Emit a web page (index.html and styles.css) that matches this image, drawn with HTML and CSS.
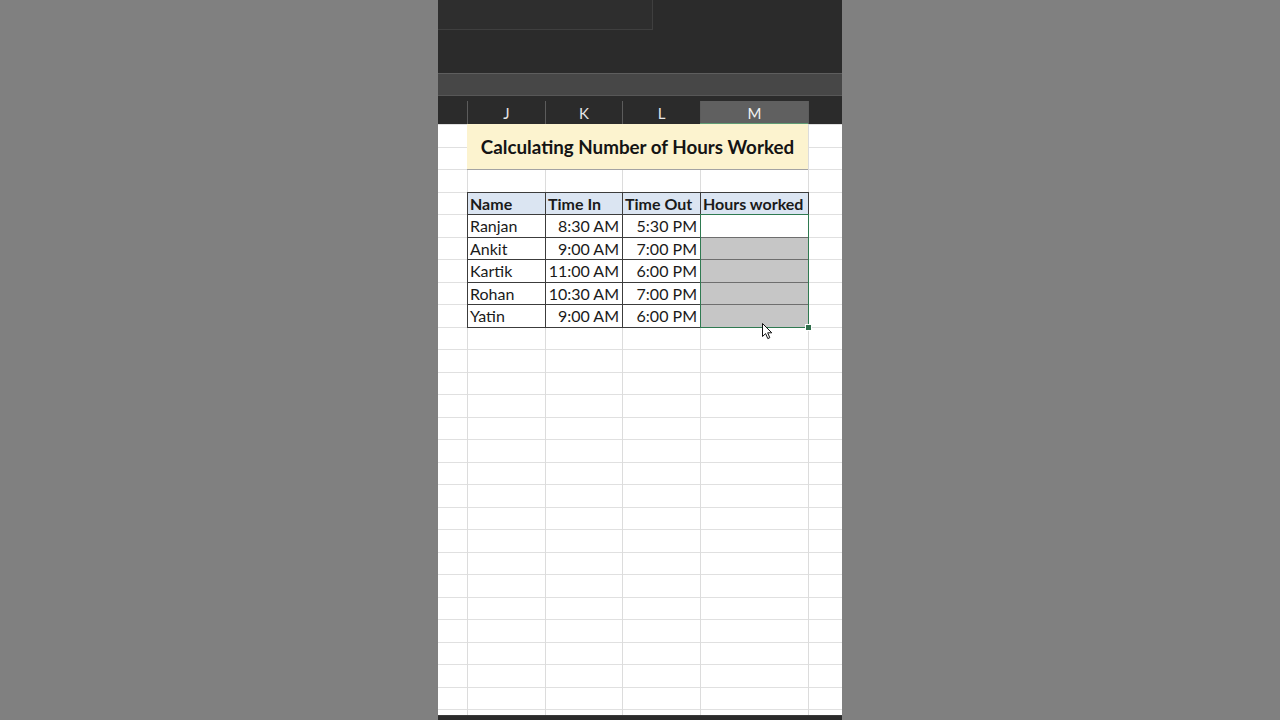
FILE: index.html
```html
<!DOCTYPE html>
<html lang="en">
<head>
<meta charset="utf-8">
<title>Calculating Number of Hours Worked</title>
<link rel="stylesheet" href="styles.css">
</head>
<body>
<div class="app">
  <div class="topbar"><div class="namebox"></div></div>
  <div class="formulabar"></div>
  <div class="colheads">
    <div class="ch ch-edge"></div>
    <div class="ch">J</div>
    <div class="ch">K</div>
    <div class="ch">L</div>
    <div class="ch ch-active">M</div>
    <div class="ch ch-last"></div>
  </div>
  <div class="sheet">
    <div class="title">Calculating Number of Hours Worked</div>

    <div class="c hd cj r4">Name</div>
    <div class="c hd ck r4">Time In</div>
    <div class="c hd cl r4">Time Out</div>
    <div class="c hd cm r4">Hours worked</div>

    <div class="c cj r5">Ranjan</div>
    <div class="c num ck r5">8:30 AM</div>
    <div class="c num cl r5">5:30 PM</div>
    <div class="c cm r5"></div>

    <div class="c cj r6">Ankit</div>
    <div class="c num ck r6">9:00 AM</div>
    <div class="c num cl r6">7:00 PM</div>
    <div class="c cm fill r6"></div>

    <div class="c cj r7">Kartik</div>
    <div class="c num ck r7">11:00 AM</div>
    <div class="c num cl r7">6:00 PM</div>
    <div class="c cm fill r7"></div>

    <div class="c cj r8">Rohan</div>
    <div class="c num ck r8">10:30 AM</div>
    <div class="c num cl r8">7:00 PM</div>
    <div class="c cm fill r8"></div>

    <div class="c cj bottom r9">Yatin</div>
    <div class="c num ck bottom r9">9:00 AM</div>
    <div class="c num cl bottom r9">6:00 PM</div>
    <div class="c cm fill bottom r9"></div>

    <div class="selection"><span class="handle"></span></div>

    <svg class="cursor" width="11" height="17" viewBox="0 0 11 17">
      <path d="M0.5 0.5 L0.5 13.5 L3.6 10.6 L5.8 15.6 L7.8 14.7 L5.7 9.8 L9.8 9.8 Z" fill="#ffffff" stroke="#111111" stroke-width="1" stroke-linejoin="round"/>
    </svg>
  </div>
  <div class="bottombar"></div>
</div>
</body>
</html>
```
FILE: styles.css
```css
html, body {
  margin: 0;
  padding: 0;
}
body {
  background: #808080;
  font-family: Lato, "Open Sans", "Liberation Sans", sans-serif;
}
.app {
  width: 404px;
  height: 720px;
  margin: 0 auto;
  display: flex;
  flex-direction: column;
  background: #ffffff;
  overflow: hidden;
}
.topbar {
  height: 73px;
  background: #2b2b2b;
  flex: none;
}
.namebox {
  width: 214px;
  height: 29px;
  background: #2e2e2e;
  border-right: 1px solid #3f3f3f;
  border-bottom: 1px solid #3f3f3f;
}
.formulabar {
  height: 21px;
  flex: none;
  background: #474747;
  border-top: 1px solid #5e5e5e;
  border-bottom: 1px solid #575757;
}
.colheads {
  height: 28px;
  flex: none;
  background: #2b2b2b;
  display: grid;
  grid-template-columns: 29px 78px 77px 78px 108px 34px;
  align-items: end;
}
.ch {
  height: 23px;
  box-sizing: border-box;
  border-left: 1px solid #5c5c5c;
  color: #e6e6e6;
  font-size: 15px;
  display: flex;
  align-items: center;
  justify-content: center;
  padding-top: 1px;
}
.ch-edge {
  border-left: none;
}
.ch-active {
  height: 22px;
  margin-bottom: 1px;
  background: #606060;
  box-shadow: 0 1px 0 #5f9b74;
  color: #f2f2f2;
}
.sheet {
  height: 591px;
  flex: none;
  position: relative;
  display: grid;
  grid-template-columns: 29px 78px 77px 78px 108px 34px;
  grid-template-rows: repeat(14, 23px 22px);
  background-color: #ffffff;
  background-image:
    linear-gradient(#dcdcdc, #dcdcdc),
    linear-gradient(#dcdcdc, #dcdcdc),
    linear-gradient(#dcdcdc, #dcdcdc),
    linear-gradient(#dcdcdc, #dcdcdc),
    linear-gradient(#dcdcdc, #dcdcdc),
    repeating-linear-gradient(to bottom, #e0e0e0 0 1px, transparent 1px 23px, #e0e0e0 23px 24px, transparent 24px 45px);
  background-size: 1px 100%, 1px 100%, 1px 100%, 1px 100%, 1px 100%, 100% 100%;
  background-position: 29px 0, 107px 0, 184px 0, 262px 0, 370px 0, 0 0;
  background-repeat: no-repeat;
  overflow: hidden;
}
.title {
  grid-column: 2 / 6;
  grid-row: 1 / 3;
  background: #fcf3cf;
  box-shadow: 0 1px 0 #a3a3a3;
  display: flex;
  align-items: center;
  justify-content: center;
  font-weight: 700;
  font-size: 18.8px;
  color: #141414;
}
.c {
  box-sizing: border-box;
  border-left: 1px solid #3c3c3c;
  border-top: 1px solid #3c3c3c;
  background: #ffffff;
  font-size: 16px;
  color: #1a1a1a;
  display: flex;
  align-items: center;
  padding: 0 3px 1px 2px;
  white-space: nowrap;
  overflow: hidden;
}
.c.num {
  justify-content: flex-end;
}
.c.hd {
  background: #dbe5f2;
  font-weight: 700;
  padding-left: 2px;
}
.cj { grid-column: 2; }
.ck { grid-column: 3; }
.cl { grid-column: 4; }
.cm { grid-column: 5; box-shadow: 1px 0 0 #3c3c3c; }
.r4 { grid-row: 4; }
.r5 { grid-row: 5; }
.r6 { grid-row: 6; }
.r7 { grid-row: 7; }
.r8 { grid-row: 8; }
.r9 { grid-row: 9; }
.c.bottom {
  box-shadow: 0 1px 0 #3c3c3c;
}
.c.cm.bottom {
  box-shadow: 1px 0 0 #3c3c3c, 0 1px 0 #3c3c3c, 1px 1px 0 #3c3c3c;
}
.c.fill {
  background: #c6c6c6;
  border-top-color: #6e6e6e;
}
.selection {
  grid-column: 5;
  grid-row: 5 / 10;
  margin: 0 -1px -1px 0;
  border: 1px solid #2f7a51;
  position: relative;
  z-index: 2;
  pointer-events: none;
}
.handle {
  position: absolute;
  right: -4px;
  bottom: -4px;
  width: 5px;
  height: 5px;
  background: #2f6e4b;
  border: 1px solid #ffffff;
}
.cursor {
  position: absolute;
  left: 324px;
  top: 199px;
  z-index: 3;
}
.bottombar {
  flex: 1;
  background: #2b2b2b;
  border-top: 1px solid #3a3a3a;
}
```
